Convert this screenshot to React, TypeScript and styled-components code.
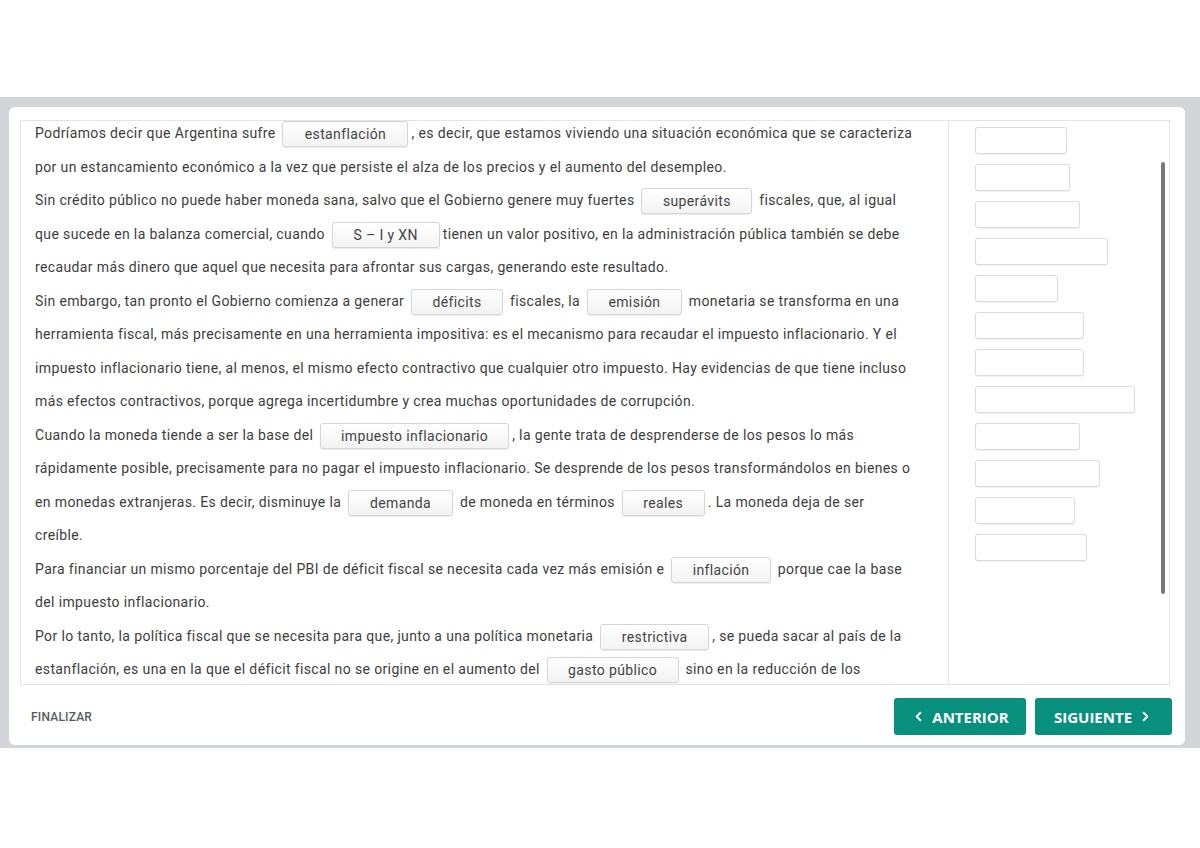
import styled, { createGlobalStyle } from "styled-components";
import { ChevronLeft, ChevronRight } from "lucide-react";

const GlobalStyle = createGlobalStyle`
  body {
    margin: 0;
    background-color: #ffffff;
    font-family: Roboto, "Liberation Sans", sans-serif;
  }
`;

const Page = styled.div`
  width: 1200px;
  height: 848px;
  padding-top: 97px;
  box-sizing: border-box;
`;

const Band = styled.div`
  background-color: #d3d6d9;
  padding: 10px 15px 3px 9px;
`;

const Card = styled.div`
  background-color: #ffffff;
  border-radius: 6px;
  padding: 13px 15px 10px 11px;
`;

const Exercise = styled.div`
  position: relative;
  display: grid;
  grid-template-columns: 928px 1fr;
  height: 565px;
  border: 1px solid #e4e4e4;
  box-sizing: border-box;
`;

const TextPane = styled.div`
  overflow: hidden;
  padding: 0 34px 0 14px;
  border-right: 1px solid #e4e4e4;
  color: #3d3d3d;
  font-size: 14px;
  letter-spacing: 0.37px;
  line-height: 33.5px;
`;

const Paragraph = styled.p`
  margin: 0;
  &:first-child {
    margin-top: -4px;
  }
`;

const Blank = styled.span<{ w: number }>`
  display: inline-block;
  box-sizing: border-box;
  width: ${(p) => p.w}px;
  height: 26px;
  line-height: 24px;
  margin: 0 3px;
  vertical-align: middle;
  text-align: center;
  color: #444;
  border: 1px solid #d6d6d6;
  border-radius: 3px;
  background: linear-gradient(#ffffff, #f3f3f3);
  box-shadow: 0 1px 1px rgba(0, 0, 0, 0.08);
`;

const SlotPane = styled.div`
  display: flex;
  flex-direction: column;
  align-items: flex-start;
  gap: 10px;
  padding: 6px 0 0 26px;
`;

const Slot = styled.div<{ w: number }>`
  width: ${(p) => p.w}px;
  height: 27px;
  box-sizing: border-box;
  border: 1px solid #dcdcdc;
  border-radius: 3px;
  background-color: #ffffff;
  box-shadow: 0 1px 1px rgba(0, 0, 0, 0.06);
`;

const ScrollThumb = styled.div`
  position: absolute;
  right: 4px;
  top: 41px;
  width: 4px;
  height: 432px;
  border-radius: 2px;
  background-color: #7a7a7a;
`;

const Footer = styled.div`
  display: flex;
  align-items: center;
  justify-content: space-between;
  margin: 13px -2px 0 0;
  padding-left: 11px;
`;

const Finish = styled.span`
  font-family: Roboto, "Liberation Sans", sans-serif;
  font-size: 12px;
  font-weight: 500;
  color: #555b60;
  letter-spacing: 0.2px;
`;

const Nav = styled.div`
  display: flex;
  gap: 9px;
`;

const NavButton = styled.button<{ w: number }>`
  display: flex;
  align-items: center;
  justify-content: center;
  gap: 6px;
  width: ${(p) => p.w}px;
  height: 37px;
  border: 0;
  border-radius: 3px;
  background-color: #07907b;
  color: #ffffff;
  font-family: "Open Sans", "Liberation Sans", sans-serif;
  font-size: 15px;
  font-weight: 700;
  cursor: pointer;
`;

const slots = [92, 95, 105, 133, 83, 109, 109, 160, 105, 125, 100, 112];

function App() {
  return (
    <Page>
      <GlobalStyle />
      <Band>
        <Card>
          <Exercise>
            <TextPane>
              <Paragraph>
                Podríamos decir que Argentina sufre <Blank w={126}>estanflación</Blank>, es decir, que estamos
                viviendo una situación económica que se caracteriza por un estancamiento económico a la vez que
                persiste el alza de los precios y el aumento del desempleo.
              </Paragraph>
              <Paragraph>
                Sin crédito público no puede haber moneda sana, salvo que el Gobierno genere muy fuertes{" "}
                <Blank w={111}>superávits</Blank> fiscales, que, al igual que sucede en la balanza comercial, cuando{" "}
                <Blank w={108}>S – I y XN</Blank>tienen un valor positivo, en la administración pública también se
                debe recaudar más dinero que aquel que necesita para afrontar sus cargas, generando este resultado.
              </Paragraph>
              <Paragraph>
                Sin embargo, tan pronto el Gobierno comienza a generar <Blank w={92}>déficits</Blank> fiscales, la{" "}
                <Blank w={95}>emisión</Blank> monetaria se transforma en una herramienta fiscal, más precisamente en
                una herramienta impositiva: es el mecanismo para recaudar el impuesto inflacionario. Y el impuesto
                inflacionario tiene, al menos, el mismo efecto contractivo que cualquier otro impuesto. Hay
                evidencias de que tiene incluso más efectos contractivos, porque agrega incertidumbre y crea muchas
                oportunidades de corrupción.
              </Paragraph>
              <Paragraph>
                Cuando la moneda tiende a ser la base del <Blank w={189}>impuesto inflacionario</Blank>, la gente trata
                de desprenderse de los pesos lo más rápidamente posible, precisamente para no pagar el impuesto
                inflacionario. Se desprende de los pesos transformándolos en bienes o en monedas extranjeras. Es
                decir, disminuye la <Blank w={105}>demanda</Blank> de moneda en términos <Blank w={83}>reales</Blank>.
                La moneda deja de ser creíble.
              </Paragraph>
              <Paragraph>
                Para financiar un mismo porcentaje del PBI de déficit fiscal se necesita cada vez más emisión e{" "}
                <Blank w={100}>inflación</Blank> porque cae la base del impuesto inflacionario.
              </Paragraph>
              <Paragraph>
                Por lo tanto, la política fiscal que se necesita para que, junto a una política monetaria{" "}
                <Blank w={109}>restrictiva</Blank>, se pueda sacar al país de la estanflación, es una en la que el
                déficit fiscal no se origine en el aumento del <Blank w={132}>gasto público</Blank> sino en la
                reducción de los impuestos.
              </Paragraph>
            </TextPane>
            <SlotPane>
              {slots.map((w, i) => (
                <Slot key={i} w={w} />
              ))}
            </SlotPane>
            <ScrollThumb />
          </Exercise>
          <Footer>
            <Finish>FINALIZAR</Finish>
            <Nav>
              <NavButton w={132}>
                <ChevronLeft size={15} strokeWidth={3} />
                ANTERIOR
              </NavButton>
              <NavButton w={137}>
                SIGUIENTE
                <ChevronRight size={15} strokeWidth={3} />
              </NavButton>
            </Nav>
          </Footer>
        </Card>
      </Band>
    </Page>
  );
}

export default App;
